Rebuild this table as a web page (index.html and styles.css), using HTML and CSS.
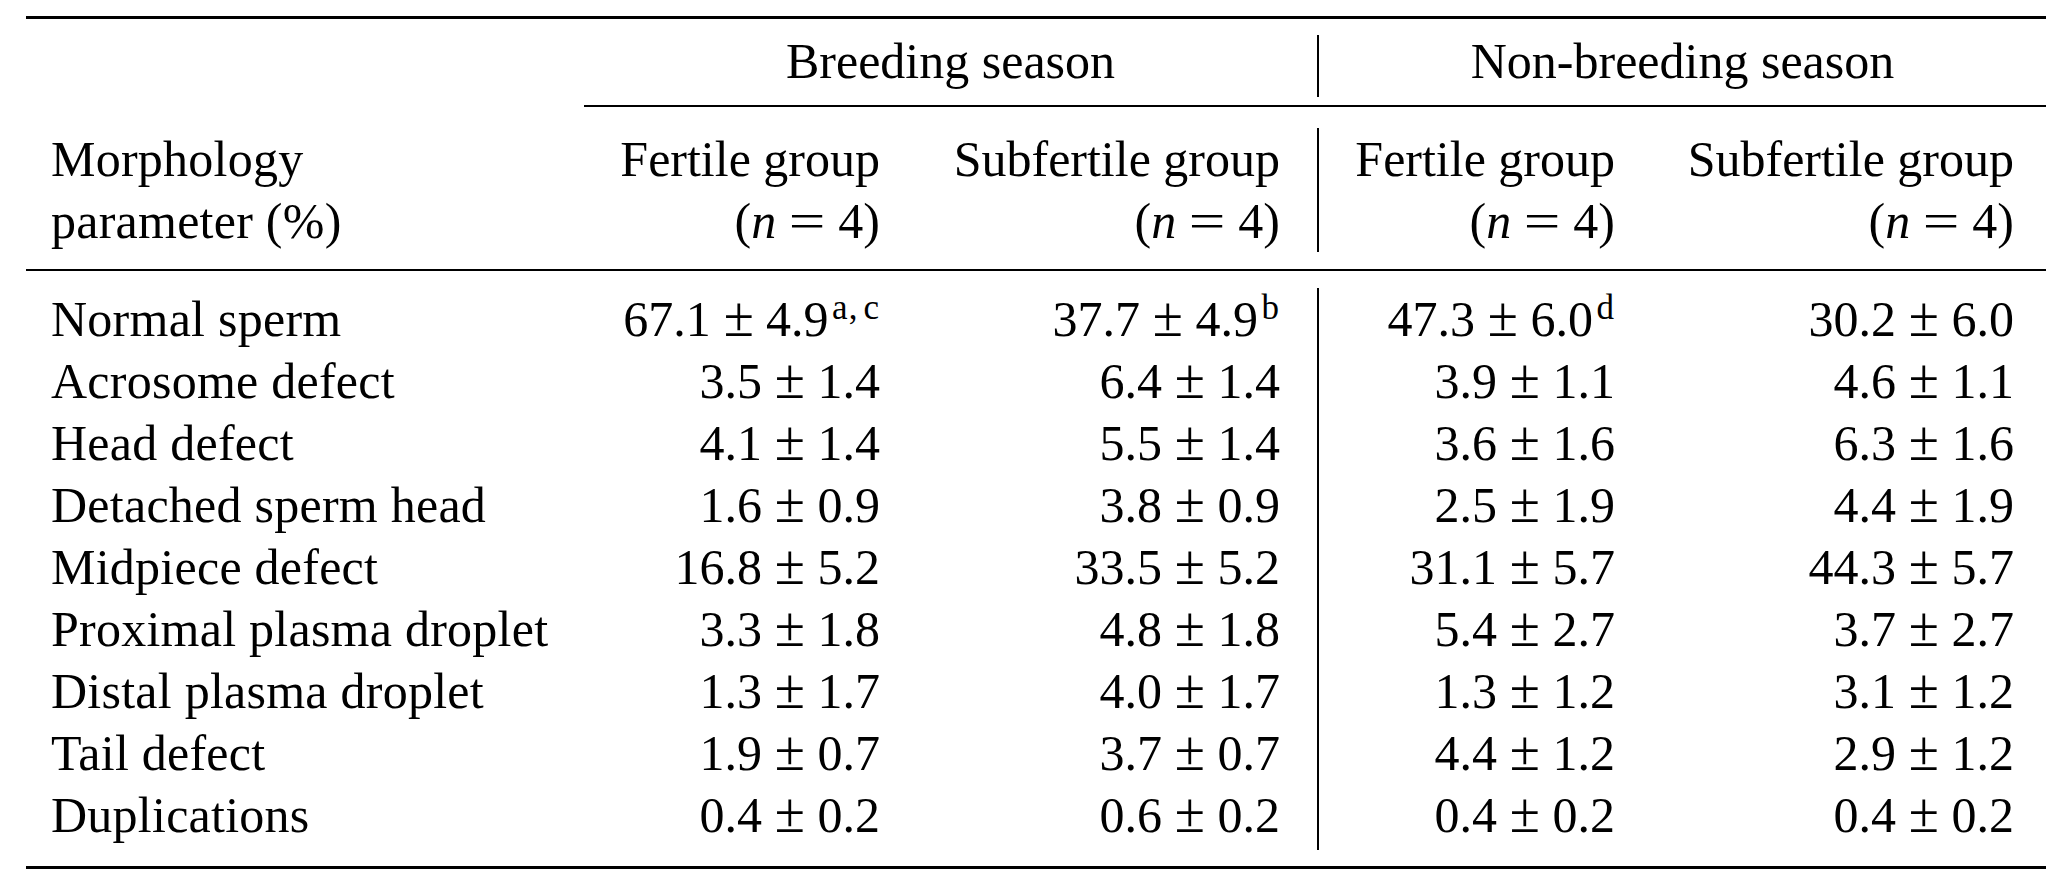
FILE: index.html
```html
<!DOCTYPE html>
<html lang="en">
<head>
<meta charset="utf-8">
<title>Sperm morphology</title>
<link rel="stylesheet" href="styles.css">
</head>
<body>
<div class="wrap">
  <div class="tbl">
    <div class="rule top"></div>

    <div class="row spanrow">
      <div class="cell lbl"></div>
      <div class="cell span">Breeding season</div>
      <div class="cell span sep">Non-breeding season</div>
    </div>

    <div class="cmid"></div>

    <div class="row headrow">
      <div class="cell lbl">Morphology<br>parameter (%)</div>
      <div class="cell num c2">Fertile group<br>(<i>n</i><span class="eq">=</span>4)</div>
      <div class="cell num c3">Subfertile group<br>(<i>n</i><span class="eq">=</span>4)</div>
      <div class="cell num c4 sep">Fertile group<br>(<i>n</i><span class="eq">=</span>4)</div>
      <div class="cell num c5">Subfertile group<br>(<i>n</i><span class="eq">=</span>4)</div>
    </div>

    <div class="rule mid"></div>

    <div class="row first">
      <div class="cell lbl">Normal sperm</div>
      <div class="cell num c2">67.1<span class="pm">±</span>4.9<sup>a<span class="comma">,</span>c</sup></div>
      <div class="cell num c3">37.7<span class="pm">±</span>4.9<sup>b</sup></div>
      <div class="cell num c4 sep">47.3<span class="pm">±</span>6.0<sup>d</sup></div>
      <div class="cell num c5">30.2<span class="pm">±</span>6.0</div>
    </div>
    <div class="row">
      <div class="cell lbl">Acrosome defect</div>
      <div class="cell num c2">3.5<span class="pm">±</span>1.4</div>
      <div class="cell num c3">6.4<span class="pm">±</span>1.4</div>
      <div class="cell num c4 sep">3.9<span class="pm">±</span>1.1</div>
      <div class="cell num c5">4.6<span class="pm">±</span>1.1</div>
    </div>
    <div class="row">
      <div class="cell lbl">Head defect</div>
      <div class="cell num c2">4.1<span class="pm">±</span>1.4</div>
      <div class="cell num c3">5.5<span class="pm">±</span>1.4</div>
      <div class="cell num c4 sep">3.6<span class="pm">±</span>1.6</div>
      <div class="cell num c5">6.3<span class="pm">±</span>1.6</div>
    </div>
    <div class="row">
      <div class="cell lbl">Detached sperm head</div>
      <div class="cell num c2">1.6<span class="pm">±</span>0.9</div>
      <div class="cell num c3">3.8<span class="pm">±</span>0.9</div>
      <div class="cell num c4 sep">2.5<span class="pm">±</span>1.9</div>
      <div class="cell num c5">4.4<span class="pm">±</span>1.9</div>
    </div>
    <div class="row">
      <div class="cell lbl">Midpiece defect</div>
      <div class="cell num c2">16.8<span class="pm">±</span>5.2</div>
      <div class="cell num c3">33.5<span class="pm">±</span>5.2</div>
      <div class="cell num c4 sep">31.1<span class="pm">±</span>5.7</div>
      <div class="cell num c5">44.3<span class="pm">±</span>5.7</div>
    </div>
    <div class="row">
      <div class="cell lbl">Proximal plasma droplet</div>
      <div class="cell num c2">3.3<span class="pm">±</span>1.8</div>
      <div class="cell num c3">4.8<span class="pm">±</span>1.8</div>
      <div class="cell num c4 sep">5.4<span class="pm">±</span>2.7</div>
      <div class="cell num c5">3.7<span class="pm">±</span>2.7</div>
    </div>
    <div class="row">
      <div class="cell lbl">Distal plasma droplet</div>
      <div class="cell num c2">1.3<span class="pm">±</span>1.7</div>
      <div class="cell num c3">4.0<span class="pm">±</span>1.7</div>
      <div class="cell num c4 sep">1.3<span class="pm">±</span>1.2</div>
      <div class="cell num c5">3.1<span class="pm">±</span>1.2</div>
    </div>
    <div class="row">
      <div class="cell lbl">Tail defect</div>
      <div class="cell num c2">1.9<span class="pm">±</span>0.7</div>
      <div class="cell num c3">3.7<span class="pm">±</span>0.7</div>
      <div class="cell num c4 sep">4.4<span class="pm">±</span>1.2</div>
      <div class="cell num c5">2.9<span class="pm">±</span>1.2</div>
    </div>
    <div class="row last">
      <div class="cell lbl">Duplications</div>
      <div class="cell num c2">0.4<span class="pm">±</span>0.2</div>
      <div class="cell num c3">0.6<span class="pm">±</span>0.2</div>
      <div class="cell num c4 sep">0.4<span class="pm">±</span>0.2</div>
      <div class="cell num c5">0.4<span class="pm">±</span>0.2</div>
    </div>

    <div class="rule bot"></div>
  </div>
</div>
</body>
</html>
```

FILE: styles.css
```css
html, body {
  margin: 0;
  padding: 0;
  background: #ffffff;
}

body {
  font-family: "Liberation Serif", "Times New Roman", serif;
  color: #000000;
}

.wrap {
  padding: 16px 21px 0 26px;
}

.tbl {
  display: grid;
  grid-template-columns: 558px 331px 402px 333px 396px;
  width: 2020px;
  font-size: 50px;
  line-height: 62px;
}

.row {
  display: contents;
}

.rule {
  grid-column: 1 / -1;
  background: #000000;
}

.rule.top {
  height: 3px;
}

.rule.mid {
  height: 2px;
}

.rule.bot {
  height: 3px;
}

.cmid {
  grid-column: 2 / -1;
  height: 2px;
  margin-top: 8px;
  background: #000000;
}

.cell {
  white-space: nowrap;
}

.lbl {
  padding-left: 25px;
  text-align: left;
  letter-spacing: 0.005em;
}

.num {
  text-align: right;
}

.c2 { padding-right: 35px; }
.c3 { padding-right: 37px; }
.c4 { padding-right: 35px; }
.c5 { padding-right: 32px; }

.sep {
  border-left: 2px solid #000000;
}

.spanrow > .cell {
  margin-top: 16px;
  line-height: 52px;
  padding-bottom: 10px;
}

.span {
  grid-column: span 2;
  text-align: center;
}

.headrow > .cell {
  margin-top: 21px;
  margin-bottom: 17px;
}

.first > .cell {
  margin-top: 17px;
}

.last > .cell {
  padding-bottom: 4px;
  margin-bottom: 16px;
}

.pm {
  display: inline-block;
  margin: 0 0.28em;
  transform: scale(1.1, 1.15);
  transform-origin: 50% 75%;
}

.eq {
  display: inline-block;
  margin: 0 0.34em;
  transform: scaleX(1.3);
}

sup {
  font-size: 0.7em;
  line-height: 0;
  vertical-align: 0.48em;
  margin-left: 0.1em;
  letter-spacing: 0.03em;
}

.comma {
  margin-right: 0.14em;
}
```
